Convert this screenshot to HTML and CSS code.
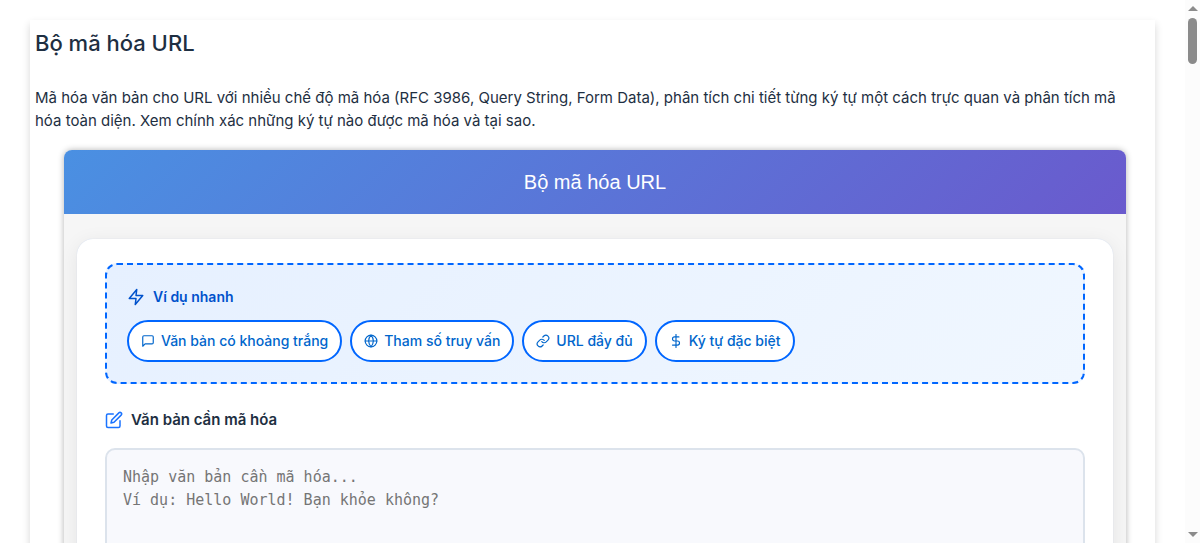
FILE: index.html
```
<!DOCTYPE html>
<html lang="vi">
<head>
    <meta charset="UTF-8">
    <meta name="viewport" content="width=device-width, initial-scale=1.0">
    <title>Bộ mã hóa URL</title>
    <link rel="stylesheet" href="styles.css">
</head>
<body>
    <main class="page">
        <article class="sheet">
            <h1 class="sheet-title">Bộ mã hóa URL</h1>
            <p class="sheet-desc">Mã hóa văn bản cho URL với nhiều chế độ mã hóa (RFC 3986, Query String, Form Data), phân tích chi tiết từng ký tự một cách trực quan và phân tích mã hóa toàn diện. Xem chính xác những ký tự nào được mã hóa và tại sao.</p>

            <section class="tool">
                <h2 class="tool-header">Bộ mã hóa URL</h2>
                <div class="tool-body">
                    <div class="panel">
                        <div class="examples">
                            <h3 class="examples-title">
                                <svg class="icon icon-md" viewBox="0 0 24 24"><polygon points="13 2 3 14 12 14 11 22 21 10 12 10 13 2"/></svg>
                                Ví dụ nhanh
                            </h3>
                            <div class="examples-list">
                                <button type="button" class="chip">
                                    <svg class="icon" viewBox="0 0 24 24"><path d="M21 15a2 2 0 0 1-2 2H7l-4 4V5a2 2 0 0 1 2-2h14a2 2 0 0 1 2 2z"/></svg>
                                    Văn bản có khoảng trắng
                                </button>
                                <button type="button" class="chip">
                                    <svg class="icon" viewBox="0 0 24 24"><circle cx="12" cy="12" r="10"/><line x1="2" y1="12" x2="22" y2="12"/><path d="M12 2a15.3 15.3 0 0 1 4 10 15.3 15.3 0 0 1-4 10 15.3 15.3 0 0 1-4-10 15.3 15.3 0 0 1 4-10z"/></svg>
                                    Tham số truy vấn
                                </button>
                                <button type="button" class="chip">
                                    <svg class="icon" viewBox="0 0 24 24"><path d="M10 13a5 5 0 0 0 7.54.54l3-3a5 5 0 0 0-7.07-7.07l-1.72 1.71"/><path d="M14 11a5 5 0 0 0-7.54-.54l-3 3a5 5 0 0 0 7.07 7.07l1.71-1.71"/></svg>
                                    URL đầy đủ
                                </button>
                                <button type="button" class="chip">
                                    <svg class="icon" viewBox="0 0 24 24"><line x1="12" y1="1" x2="12" y2="23"/><path d="M17 5H9.5a3.5 3.5 0 0 0 0 7h5a3.5 3.5 0 0 1 0 7H6"/></svg>
                                    Ký tự đặc biệt
                                </button>
                            </div>
                        </div>

                        <label class="field-label" for="input-text">
                            <svg class="icon icon-md" viewBox="0 0 24 24"><path d="M11 4H4a2 2 0 0 0-2 2v14a2 2 0 0 0 2 2h14a2 2 0 0 0 2-2v-7"/><path d="M18.5 2.5a2.121 2.121 0 0 1 3 3L12 15l-4 1 1-4 9.500-9.500z"/></svg>
                            Văn bản cần mã hóa
                        </label>
                        <textarea id="input-text" class="field-input" placeholder="Nhập văn bản cần mã hóa...&#10;Ví dụ: Hello World! Bạn khỏe không?"></textarea>
                    </div>
                </div>
            </section>
        </article>
    </main>

    <div class="scrollbar" aria-hidden="true">
        <span class="arrow arrow-up"></span>
        <span class="thumb"></span>
        <span class="arrow arrow-down"></span>
    </div>
</body>
</html>
```
FILE: styles.css
```
* {
    box-sizing: border-box;
    margin: 0;
    padding: 0;
}

body {
    display: flex;
    height: 100vh;
    overflow: hidden;
    font-family: Inter, "Noto Sans", sans-serif;
    font-size: 15px;
    line-height: 23px;
    color: #1e2f42;
    background: #fff;
}

.page {
    flex: 1;
    min-width: 0;
    padding: 20px 30px;
}

.sheet {
    padding: 5px;
    box-shadow: 0 4px 8px rgba(0, 0, 0, .16);
}

.sheet-title {
    margin-bottom: 25px;
    font-size: 22px;
    line-height: 36px;
    font-weight: 500;
}

.sheet-desc {
    margin-bottom: 18px;
    padding-right: 8px;
}

/* tool box */
.tool {
    margin: 0 24px 0 29px;
    border-radius: 8px;
    background: #f6f6f6;
    box-shadow: 0 0 6px rgba(0, 0, 0, .3);
}

.tool-header {
    padding: 20px;
    border-radius: 8px 8px 0 0;
    font-family: "Liberation Sans", Arial, sans-serif;
    font-size: 20px;
    line-height: 24px;
    font-weight: 400;
    text-align: center;
    color: #fff;
    background: linear-gradient(135deg, #4a90e2, #6a5acd);
}

.tool-body {
    padding: 25px 13px;
}

.panel {
    padding: 24px 28px;
    border-radius: 16px;
    background: #fff;
    box-shadow: 0 4px 20px rgba(0, 0, 0, .08), 0 0 1px #c8d8f0;
}

.icon {
    flex: none;
    width: 14px;
    height: 14px;
    fill: none;
    stroke: currentColor;
    stroke-width: 2;
    stroke-linecap: round;
    stroke-linejoin: round;
}

.icon-md {
    width: 18px;
    height: 18px;
}

/* quick examples */
.examples {
    padding: 20px;
    border: 2px dashed #0066ff;
    border-radius: 12px;
    background: linear-gradient(135deg, #e6f0ff, #f0f7ff);
}

.examples-title {
    display: flex;
    align-items: center;
    gap: 8px;
    margin-bottom: 12px;
    font-size: 14px;
    line-height: 23px;
    font-weight: 600;
    color: #0052cc;
}

.examples-list {
    display: flex;
    flex-wrap: wrap;
    gap: 8px;
}

.chip {
    display: inline-flex;
    align-items: center;
    gap: 6px;
    height: 42px;
    padding: 0 12px;
    border: 2px solid #0066ff;
    border-radius: 21px;
    font: 500 14px/22px Inter, "Noto Sans", sans-serif;
    color: #0066cc;
    background: #fff;
    cursor: pointer;
}

/* input */
.field-label {
    display: flex;
    align-items: center;
    gap: 8px;
    margin: 24px 0 16px;
    line-height: 24px;
    font-weight: 600;
}

.field-label .icon {
    color: #1a73ff;
}

.field-input {
    display: block;
    width: 100%;
    height: 180px;
    padding: 16px;
    border: 2px solid #dce3ec;
    border-radius: 10px;
    font: 15px/23px "DejaVu Sans Mono", monospace;
    color: #1e2f42;
    background: #f8f9fd;
    resize: none;
}

.field-input::placeholder {
    color: #757575;
}

/* scrollbar */
.scrollbar {
    flex: none;
    display: flex;
    flex-direction: column;
    align-items: center;
    width: 15px;
    padding: 6px 0;
    background: #fcfcfc;
}

.thumb {
    width: 9px;
    height: 46px;
    margin-top: 7px;
    border-radius: 5px;
    background: #8b8b8b;
}

.arrow {
    border: 5px solid transparent;
}

.arrow-up {
    border-top: 0;
    border-bottom-color: #8b8b8b;
}

.arrow-down {
    margin-top: auto;
    border-bottom: 0;
    border-top-color: #8b8b8b;
}
```
